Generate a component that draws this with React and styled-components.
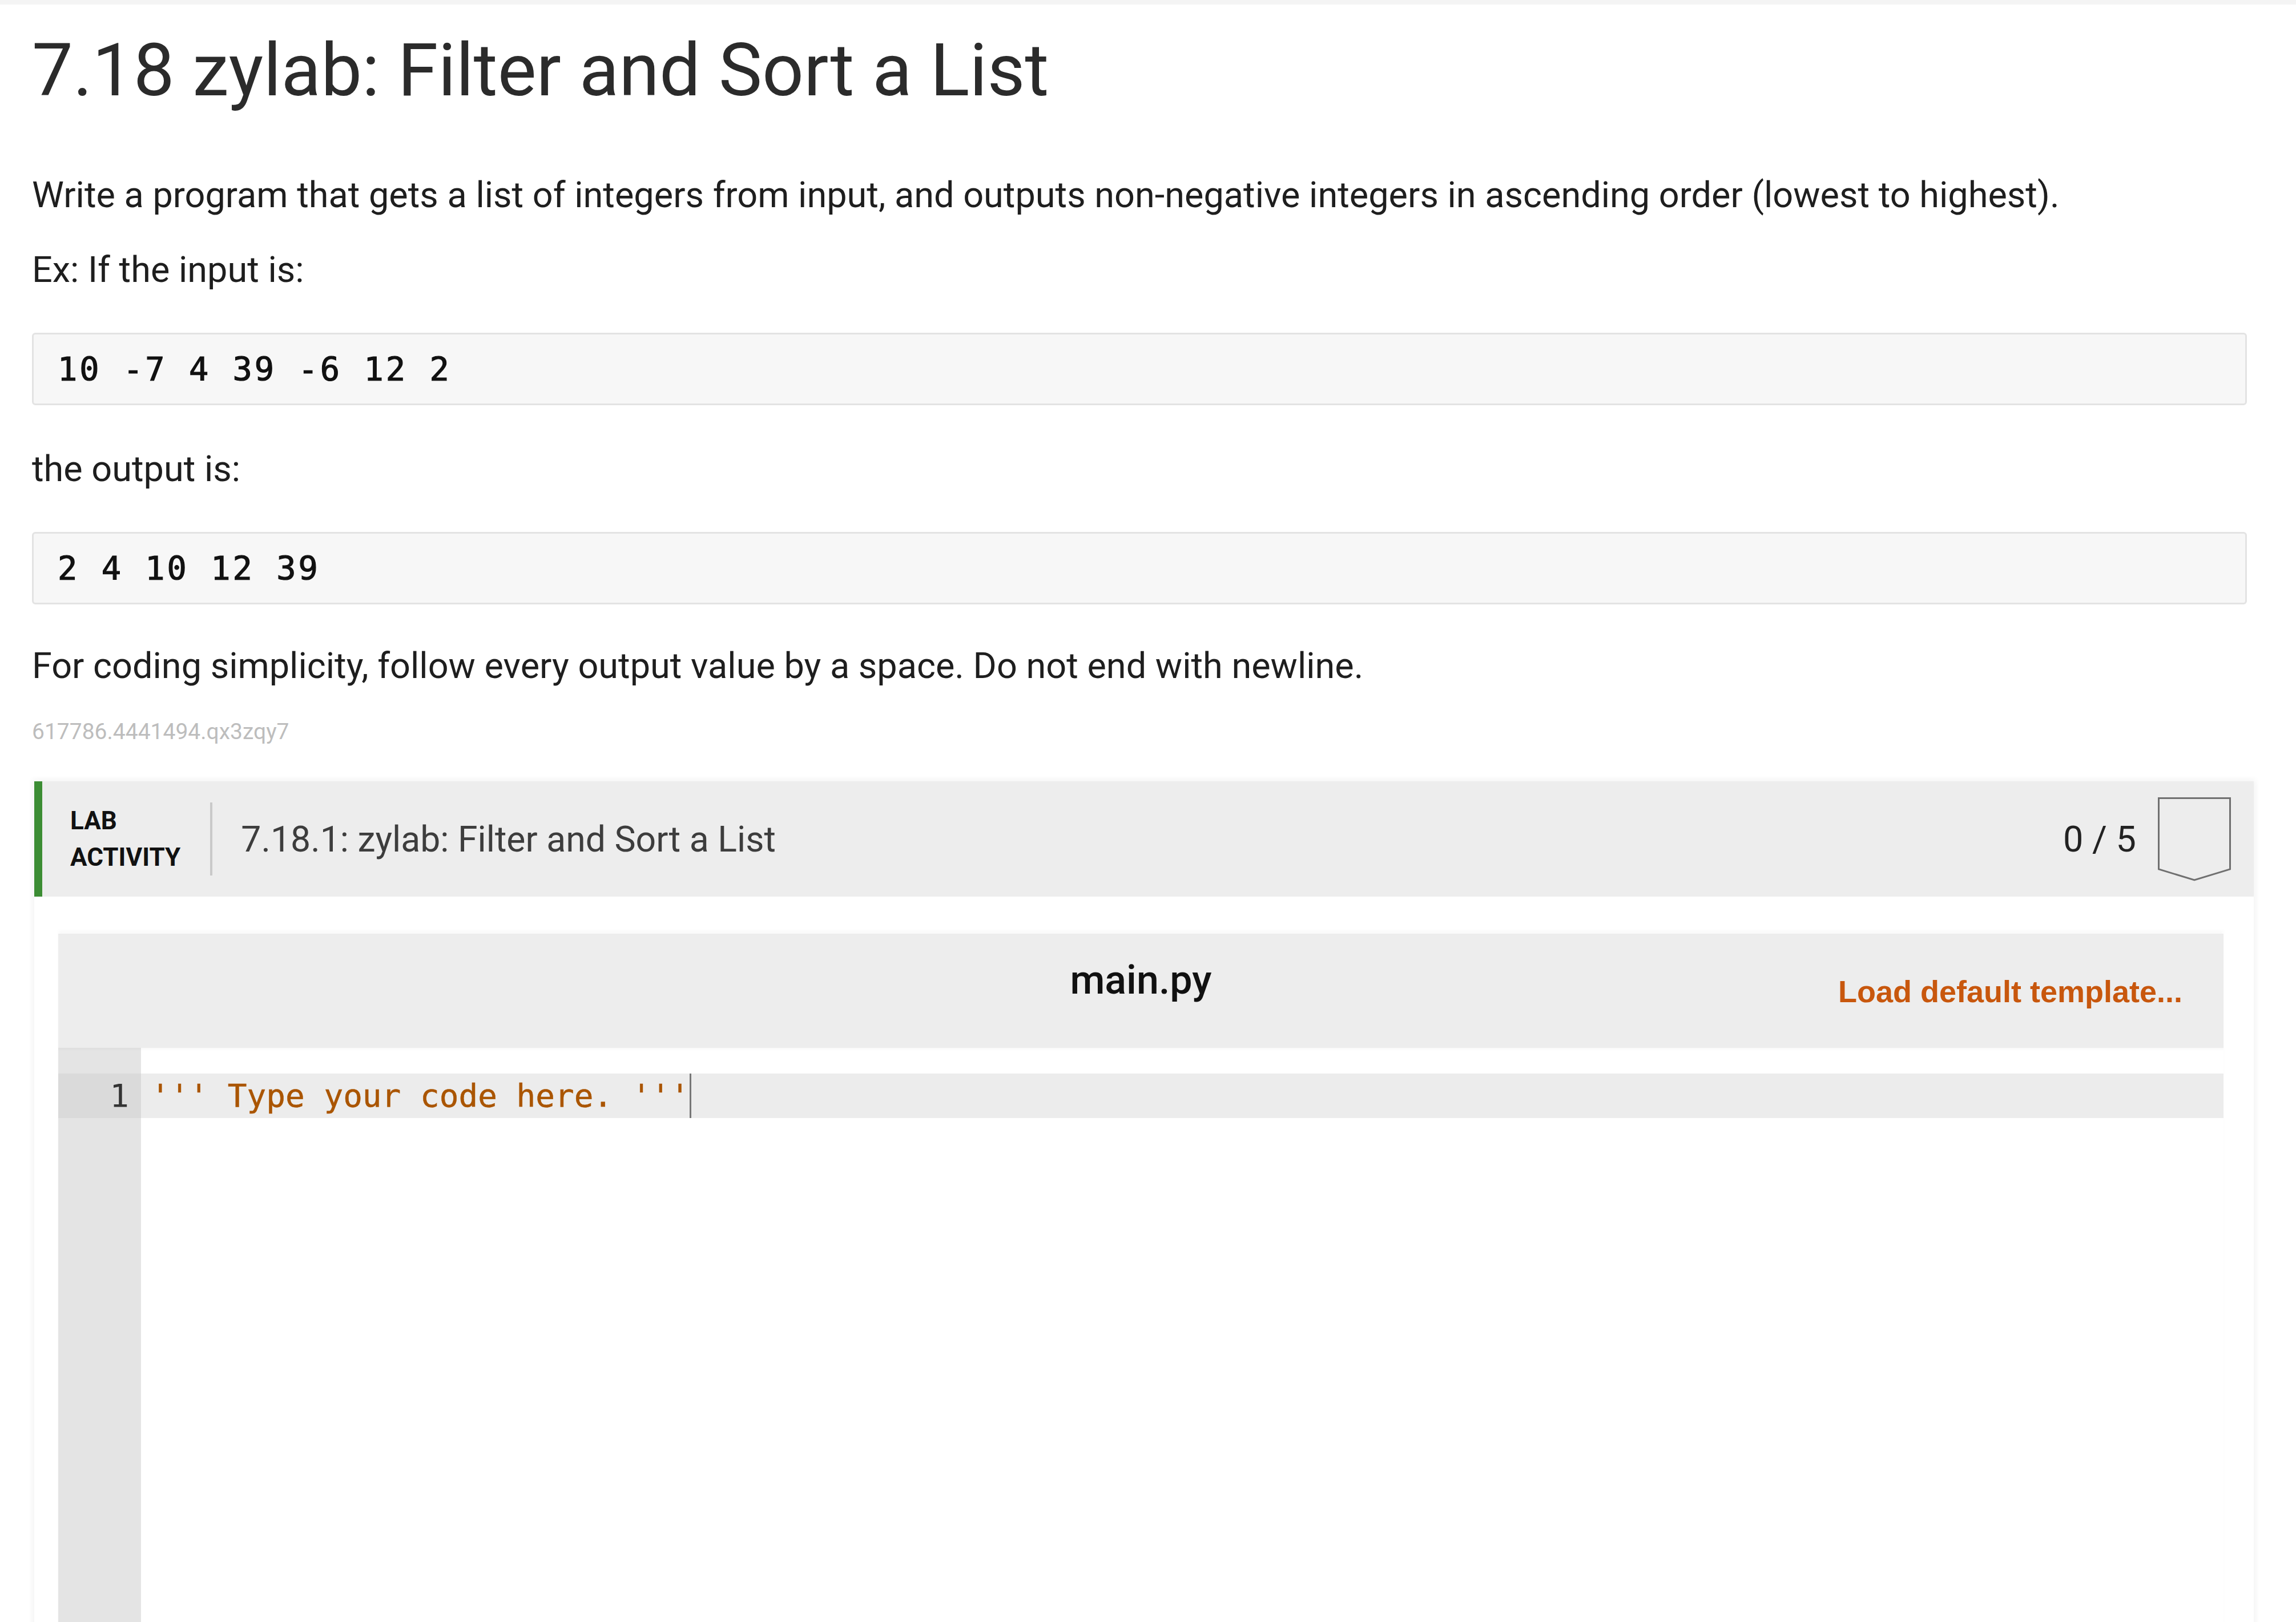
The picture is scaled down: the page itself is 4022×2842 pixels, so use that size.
import React from "react";
import styled, { createGlobalStyle } from "styled-components";

const GlobalStyle = createGlobalStyle`
  html, body {
    margin: 0;
    padding: 0;
    background: #fff;
    overflow: hidden;
  }
  body {
    font-family: Roboto, "Liberation Sans", sans-serif;
    color: #1e1e1e;
  }
`;

const TopStrip = styled.div`
  height: 8px;
  background: #f4f4f4;
`;

const Content = styled.main`
  width: 3880px;
  padding-left: 56px;
`;

const Title = styled.h1`
  margin: 40px 0 0;
  font-size: 128px;
  line-height: 150px;
  font-weight: 400;
  color: #2b2b2b;
`;

const Para = styled.p`
  margin: ${(p) => p.$top}px 0 0;
  font-size: 63px;
  line-height: 80px;
  color: #1e1e1e;
`;

const CodeBox = styled.pre`
  margin: ${(p) => p.$top}px 0 0;
  padding: 26px 38px 25px 42px;
  background: #f7f7f7;
  border: 3px solid #e3e3e3;
  border-radius: 6px;
  font-family: "DejaVu Sans Mono", monospace;
  font-size: 57px;
  line-height: 70px;
  font-weight: 400;
  letter-spacing: 4px;
  color: #111;
  -webkit-text-stroke: 1.2px #111;
`;

const ResourceId = styled.div`
  margin-top: 53px;
  font-size: 39px;
  line-height: 44px;
  color: #bdbdbd;
`;

const Lab = styled.section`
  margin: 65px -12px 0 4px;
  background: #fff;
  box-shadow: 0 0 10px 3px rgba(0, 0, 0, 0.05);
`;

const LabHeader = styled.header`
  display: flex;
  align-items: center;
  height: 202px;
  box-sizing: border-box;
  padding: 0 40px 0 49px;
  background: #ededed;
  border-left: 14px solid #3c8d34;
`;

const LabLabel = styled.div`
  font-size: 44px;
  line-height: 64px;
  font-weight: 700;
  color: #111;
`;

const Divider = styled.div`
  width: 4px;
  height: 128px;
  margin: 0 50px 0 52px;
  background: #c9c9c9;
`;

const ActivityTitle = styled.div`
  flex: 1;
  font-size: 62.5px;
  color: #3d3d3d;
`;

const Score = styled.div`
  margin-right: 38px;
  font-size: 63px;
  color: #222;
`;

const LabBody = styled.div`
  padding: 65px 53px 0 42px;
`;

const Editor = styled.div`
  box-shadow: 0 -6px 6px rgba(0, 0, 0, 0.025);
`;

const EditorBar = styled.div`
  display: grid;
  grid-template-columns: 1fr auto 1fr;
  align-items: start;
  height: 200px;
  box-sizing: border-box;
  padding-top: 40px;
  background: #ededed;
`;

const FileName = styled.div`
  grid-column: 2;
  font-size: 70px;
  line-height: 82px;
  font-weight: 500;
  color: #111;
`;

const LoadLink = styled.a`
  grid-column: 3;
  justify-self: end;
  margin: 31px 72px 0 0;
  font-family: "Liberation Sans", Arial, sans-serif;
  font-size: 54px;
  line-height: 60px;
  font-weight: 700;
  color: #c8570d;
  text-decoration: none;
  cursor: pointer;
`;

const EditorBody = styled.div`
  min-height: 1100px;
  padding-top: 45px;
  background: linear-gradient(to right, #e4e4e4 145px, #fff 145px);
  box-shadow: inset 0 6px 4px -4px rgba(0, 0, 0, 0.03);
`;

const Line = styled.div`
  display: grid;
  grid-template-columns: 145px 1fr;
  height: 78px;
  font-family: "DejaVu Sans Mono", monospace;
  font-size: 56px;
  line-height: 78px;
`;

const LineNo = styled.div`
  padding-right: 21px;
  text-align: right;
  color: #333;
  background: ${(p) => (p.$active ? "#dadada" : "transparent")};
`;

const LineCode = styled.div`
  padding-left: 17px;
  white-space: pre;
  color: #aa5500;
  -webkit-text-stroke: 0.5px #aa5500;
  background: ${(p) => (p.$active ? "#ececec" : "transparent")};
`;

const Caret = styled.span`
  display: inline-block;
  width: 3px;
  height: 78px;
  vertical-align: top;
  background: #777;
`;

const Badge = () => (
  <svg width="128" height="147" viewBox="0 0 128 147">
    <polygon
      points="1.5,1.5 126.5,1.5 126.5,126 64,145 1.5,126"
      fill="none"
      stroke="#707070"
      strokeWidth="3"
    />
  </svg>
);

export default function App() {
  return (
    <>
      <GlobalStyle />
      <TopStrip />
      <Content>
        <Title>7.18 zylab: Filter and Sort a List</Title>
        <Para $top={104}>
          Write a program that gets a list of integers from input, and outputs
          non-negative integers in ascending order (lowest to highest).
        </Para>
        <Para $top={51}>Ex: If the input is:</Para>
        <CodeBox $top={70}>10 -7 4 39 -6 12 2</CodeBox>
        <Para $top={72}>the output is:</Para>
        <CodeBox $top={70}>2 4 10 12 39</CodeBox>
        <Para $top={68}>
          For coding simplicity, follow every output value by a space. Do not
          end with newline.
        </Para>
        <ResourceId>617786.4441494.qx3zqy7</ResourceId>

        <Lab>
          <LabHeader>
            <LabLabel>
              LAB
              <br />
              ACTIVITY
            </LabLabel>
            <Divider />
            <ActivityTitle>7.18.1: zylab: Filter and Sort a List</ActivityTitle>
            <Score>0 / 5</Score>
            <Badge />
          </LabHeader>
          <LabBody>
            <Editor>
              <EditorBar>
                <FileName>main.py</FileName>
                <LoadLink>Load default template...</LoadLink>
              </EditorBar>
              <EditorBody>
                <Line>
                  <LineNo $active>1</LineNo>
                  <LineCode $active>
                    {"''' Type your code here. '''"}
                    <Caret />
                  </LineCode>
                </Line>
              </EditorBody>
            </Editor>
          </LabBody>
        </Lab>
      </Content>
    </>
  );
}
